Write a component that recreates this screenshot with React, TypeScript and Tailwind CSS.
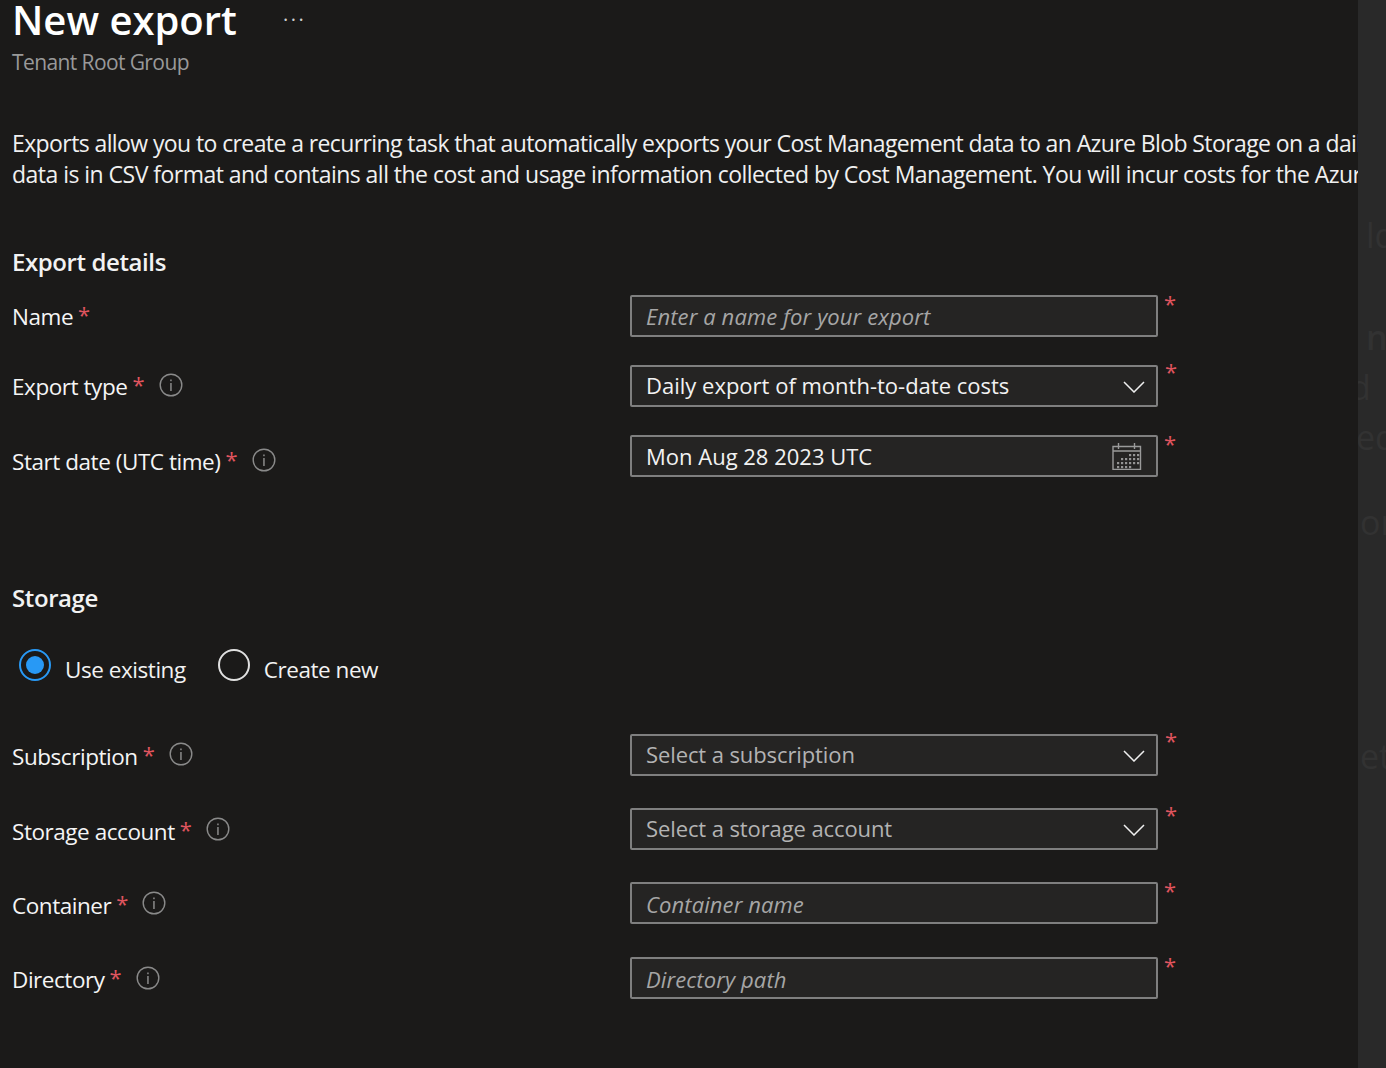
import React from 'react';

const font = { fontFamily: '"Open Sans", "Noto Sans", sans-serif' };

type Kind = 'placeholder' | 'select' | 'selectPlaceholder' | 'date';

function InfoIcon() {
  return (
    <svg width="24" height="24" viewBox="0 0 24 24" fill="none" className="shrink-0">
      <circle cx="12" cy="12" r="10.8" stroke="#8a8a8a" strokeWidth="1.4" />
      <rect x="11.2" y="10" width="1.5" height="8" fill="#8a8a8a" />
      <rect x="11.2" y="6.5" width="1.5" height="1.7" fill="#8a8a8a" />
    </svg>
  );
}

function CalendarIcon() {
  const dots = [
    [18, 13], [22, 13], [26, 13], [10, 17], [14, 17], [18, 17], [22, 17], [26, 17],
    [6, 21], [10, 21], [14, 21], [18, 21], [22, 21], [26, 21], [6, 25], [10, 25], [14, 25], [18, 25],
  ];
  return (
    <svg width="30" height="28" viewBox="0 0 30 28" fill="none">
      <path d="M1 4.5h27.5v23H1z M1 9h27.5 M6.5 1v6 M22.5 1v6" stroke="#9a9a9a" strokeWidth="1.4" />
      {dots.map(([x, y]) => (
        <rect key={`${x}-${y}`} x={x - 1} y={y - 1} width="2.2" height="2.2" fill="#949494" />
      ))}
    </svg>
  );
}

function Chevron() {
  return (
    <svg width="22" height="12" viewBox="0 0 22 12" fill="none" className="mt-[2px]">
      <path d="M1 1l10 10L21 1" stroke="#f0f0f0" strokeWidth="1.5" />
    </svg>
  );
}

function Field({ text, kind, textClass }: { text: string; kind: Kind; textClass?: string }) {
  const kindClass =
    kind === 'placeholder'
      ? 'italic tracking-[0.1px] text-[#a6a6a6]'
      : kind === 'selectPlaceholder'
        ? 'tracking-[-0.1px] text-[#b3b3b3]'
        : 'text-[#f2f2f2]';
  return (
    <div className="flex h-[42px] w-[528px] items-center justify-between rounded-[2px] border-2 border-[#7f7f7f] bg-[#252423] pl-[14px] pr-[11px]">
      <span className={`text-[22px] ${kindClass} ${textClass ?? ''}`}>{text}</span>
      {(kind === 'select' || kind === 'selectPlaceholder') && <Chevron />}
      {kind === 'date' && (
        <div className="mr-[3px] flex">
          <CalendarIcon />
        </div>
      )}
    </div>
  );
}

function Row({
  label,
  info,
  text,
  kind,
  className,
  labelClass,
  textClass,
}: {
  label: string;
  info?: boolean;
  text: string;
  kind: Kind;
  className: string;
  labelClass?: string;
  textClass?: string;
}) {
  const isSelect = kind === 'select' || kind === 'selectPlaceholder';
  return (
    <div className={`flex items-start ${className}`}>
      <div className="flex h-[42px] w-[618px] items-center">
        <div className={`flex items-center ${labelClass ?? ''}`}>
          <span className="mt-[2px] text-[22.5px] tracking-[-0.45px] text-[#f5f5f5]">{label}</span>
          <span className="ml-[5px] mt-[-3px] text-[22px] text-[#e0555f]">*</span>
          {info && (
            <span className="ml-[14px] mt-[-3px] flex">
              <InfoIcon />
            </span>
          )}
        </div>
      </div>
      <Field text={text} kind={kind} textClass={textClass} />
      <span
        className={
          isSelect
            ? 'ml-[7px] mt-[-9px] text-[22px] leading-[30px] text-[#e0555f]'
            : 'ml-[6px] mt-[-7px] text-[22px] leading-[30px] text-[#e0555f]'
        }
      >
        *
      </span>
    </div>
  );
}

export default function App() {
  return (
    <div className="flex h-[1068px] w-[1386px] overflow-hidden bg-[#1b1a19]" style={font}>
      <main className="h-full w-[1358px] shrink-0 overflow-hidden pl-3">
        <div className="-mt-[5px] flex items-center">
          <h1 className="text-[40px] font-semibold leading-[50px] text-white">New export</h1>
          <span className="ml-[46px] text-[20px] leading-[50px] tracking-[2.5px] text-[#cfcfcf]">···</span>
        </div>
        <p className="mt-[3px] text-[21px] leading-[28px] tracking-[-0.6px] text-[#999999]">Tenant Root Group</p>

        <div className="mt-[52px] w-[1500px] text-[23px] leading-[31px] tracking-[-0.6px] text-[#f0f0f0]">
          <p className="whitespace-nowrap">
            Exports allow you to create a recurring task that automatically exports your Cost Management data to an Azure Blob Storage on a daily
          </p>
          <p className="whitespace-nowrap tracking-[-0.53px]">
            data is in CSV format and contains all the cost and usage information collected by Cost Management. You will incur costs for the Azure
          </p>
        </div>

        <h2 className="mt-[56px] text-[24px] font-semibold leading-[32px] tracking-[-0.4px] text-[#f2f2f2]">Export details</h2>
        <Row className="mt-[17px]" label="Name" text="Enter a name for your export" kind="placeholder" />
        <Row className="mt-[28px]" label="Export type" info text="Daily export of month-to-date costs" kind="select" textClass="mt-[-2px]" />
        <Row className="mt-[28px]" labelClass="mt-[10px]" label="Start date (UTC time)" info text="Mon Aug 28 2023 UTC" kind="date" />

        <h2 className="mt-[105px] text-[24px] font-semibold leading-[32px] tracking-[-0.4px] text-[#f2f2f2]">Storage</h2>

        <div className="ml-[7px] mt-[30px] flex items-center">
          <span className="flex h-8 w-8 items-center justify-center rounded-full border-2 border-[#2899f5]">
            <span className="h-[18px] w-[18px] rounded-full bg-[#2899f5]" />
          </span>
          <span className="ml-[14px] mt-[9px] text-[22.5px] tracking-[-0.45px] text-[#f2f2f2]">Use existing</span>
          <span className="ml-[32px] h-8 w-8 rounded-full border-2 border-[#e0e0e0]" />
          <span className="ml-[14px] mt-[9px] text-[22.5px] tracking-[-0.45px] text-[#f2f2f2]">Create new</span>
        </div>

        <Row className="mt-[47px]" labelClass="mt-[2px]" label="Subscription" info text="Select a subscription" kind="selectPlaceholder" />
        <Row className="mt-[32px]" labelClass="mt-[4px]" label="Storage account" info text="Select a storage account" kind="selectPlaceholder" />
        <Row className="mt-[32px]" labelClass="mt-[4px]" label="Container" info text="Container name" kind="placeholder" textClass="mt-[4px]" />
        <Row className="mt-[33px]" labelClass="mt-[3px]" label="Directory" info text="Directory path" kind="placeholder" textClass="mt-[4px]" />
      </main>

      <aside className="h-full w-[28px] shrink-0 overflow-hidden bg-[#292929] pt-[215px] text-[34px] leading-[40px] text-[#323232]">
        <div className="ml-[8px]">ld</div>
        <div className="ml-[8px] mt-[62px] font-semibold">n</div>
        <div className="-ml-[8px] mt-[10px]">d</div>
        <div className="-ml-[2px] mt-[10px]">ed</div>
        <div className="ml-[2px] mt-[45px]">or</div>
        <div className="ml-[2px] mt-[194px]">et</div>
      </aside>
    </div>
  );
}
